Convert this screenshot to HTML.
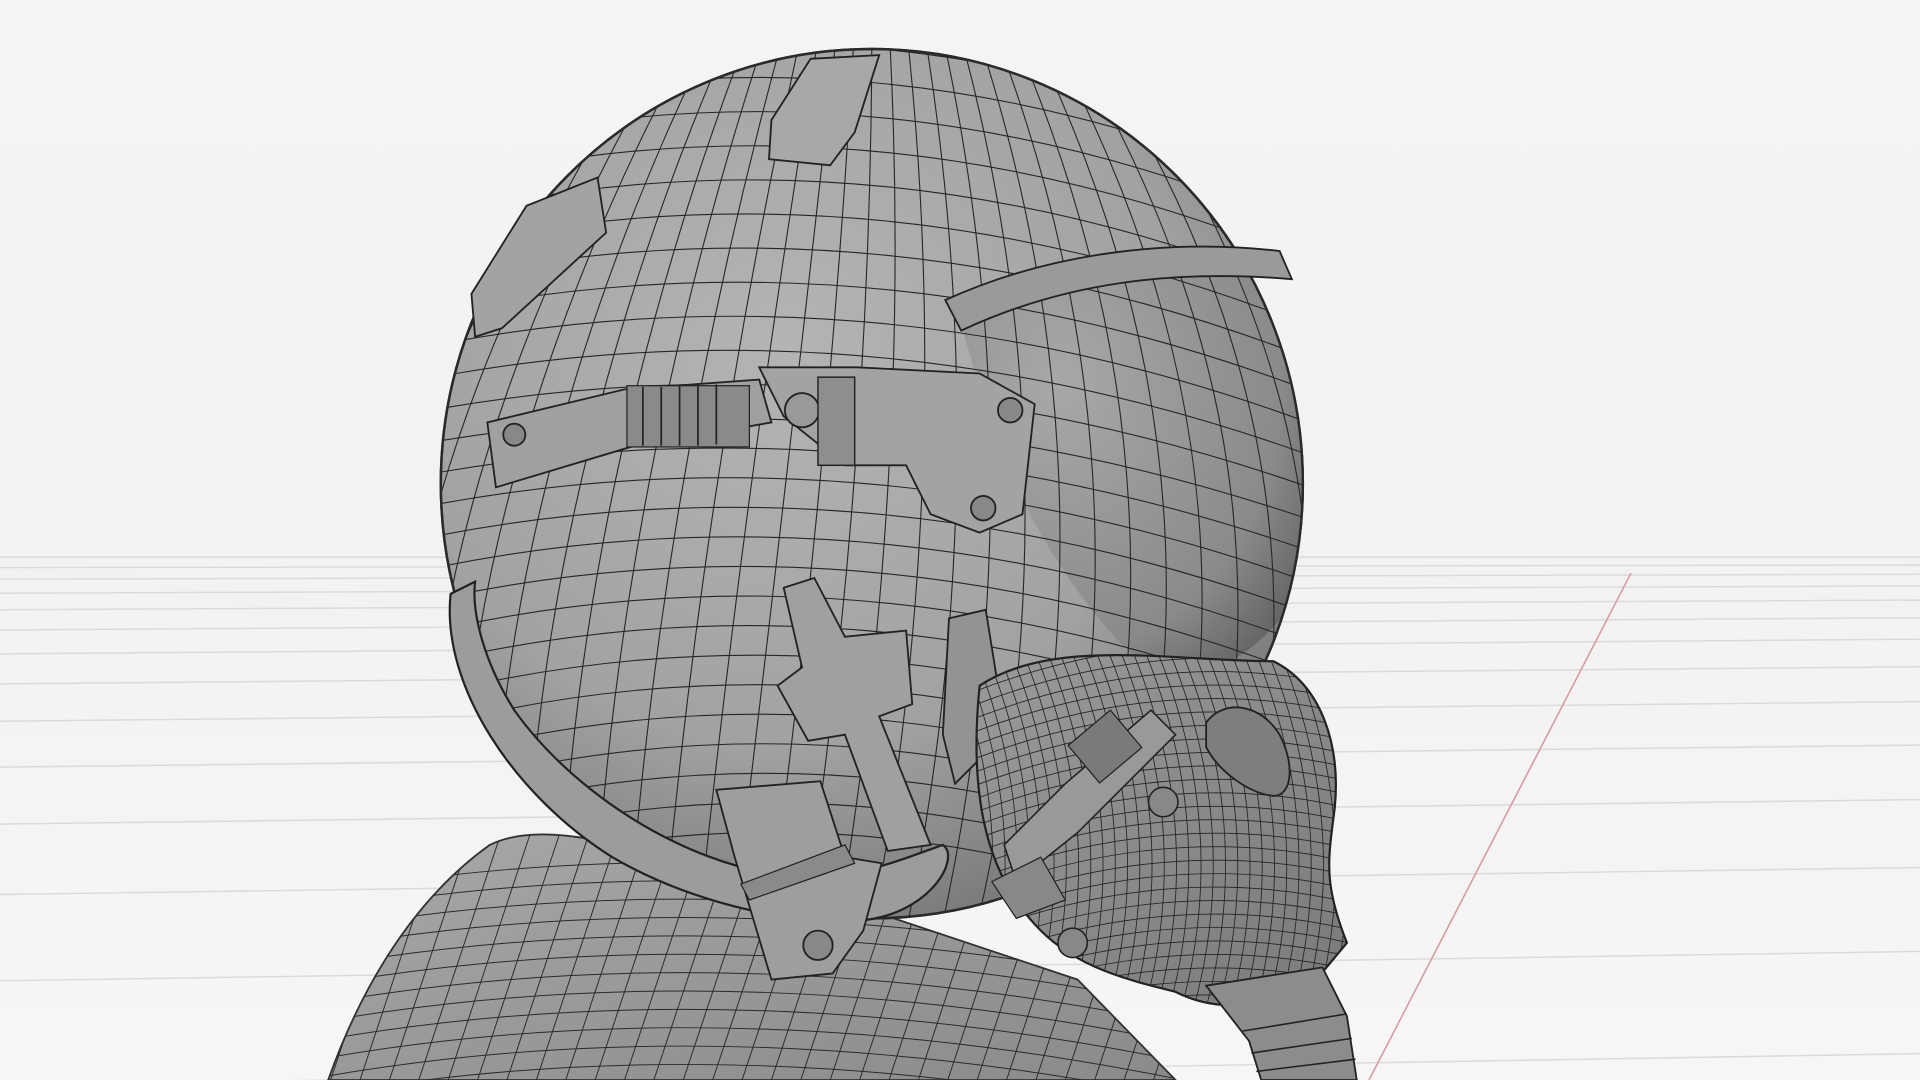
<!DOCTYPE html>
<html><head><meta charset="utf-8"><style>
html,body{margin:0;padding:0;background:#f4f4f4;overflow:hidden;width:1920px;height:1080px}
svg{display:block}
</style></head><body>
<svg id="s" width="1920" height="1080" viewBox="0 0 1568 882" xmlns="http://www.w3.org/2000/svg">
<defs>
<linearGradient id="bg" x1="0" y1="0" x2="0" y2="1"><stop offset="0" stop-color="#f4f4f4"/><stop offset="0.5" stop-color="#f2f2f2"/><stop offset="1" stop-color="#f6f6f6"/></linearGradient>
<radialGradient id="hg" cx="0.4" cy="0.35" r="0.75"><stop offset="0" stop-color="#b4b4b4"/><stop offset="0.6" stop-color="#a2a2a2"/><stop offset="1" stop-color="#6e6e6e"/></radialGradient>
<radialGradient id="vg" cx="0.3" cy="0.3" r="0.9"><stop offset="0" stop-color="#a8a8a8"/><stop offset="0.7" stop-color="#8a8a8a"/><stop offset="1" stop-color="#5a5a5a"/></radialGradient>
<linearGradient id="bodyg" x1="0" y1="0" x2="1" y2="1"><stop offset="0" stop-color="#a8a8a8"/><stop offset="1" stop-color="#8a8a8a"/></linearGradient>
<linearGradient id="mg" x1="0" y1="0" x2="1" y2="1"><stop offset="0" stop-color="#9a9a9a"/><stop offset="1" stop-color="#7a7a7a"/></linearGradient>
<clipPath id="hc"><ellipse cx="712" cy="395" rx="352" ry="355"/></clipPath>
<clipPath id="bc"><path d="M268,882 C290,820 330,740 400,690 C440,670 500,690 560,700 L700,740 C760,760 820,780 880,800 L960,882 Z"/></clipPath>
<clipPath id="mc"><path d="M800,560 C860,520 960,540 1040,540 C1080,560 1095,610 1090,660 C1085,700 1080,720 1100,770 L1075,800 C1040,820 1000,830 960,810 C920,800 880,790 850,760 C810,720 790,660 800,560 Z"/></clipPath>
</defs>
<rect width="1568" height="882" fill="url(#bg)"/>
<g id="floor" stroke="#dadada" stroke-width="1.2" fill="none"></g>
<line x1="1332" y1="468" x2="1118" y2="882" stroke="#d99aa2" stroke-width="1.3"/>
<path d="M268,882 C290,820 330,740 400,690 C440,670 500,690 560,700 L700,740 C760,760 820,780 880,800 L960,882 Z" fill="url(#bodyg)" stroke="#333" stroke-width="1.5"/>
<g id="bodyw" clip-path="url(#bc)" stroke="#2a2a2a" stroke-width="0.8" fill="none"></g>
<ellipse cx="712" cy="395" rx="352" ry="355" fill="url(#hg)" stroke="#333" stroke-width="2"/>
<path d="M780,250 C880,210 980,200 1050,225 C1075,300 1070,420 1050,500 C1020,540 980,555 950,555 C900,520 860,460 820,380 C800,320 790,280 780,250 Z" fill="url(#vg)" clip-path="url(#hc)"/>
<g id="helw" clip-path="url(#hc)" stroke="#262626" stroke-width="0.9" fill="none"></g>
<ellipse cx="712" cy="395" rx="352" ry="355" fill="none" stroke="#2a2a2a" stroke-width="2"/>
<path d="M772,245 C860,205 960,195 1045,205 L1055,228 C960,220 870,230 785,270 Z" fill="#9a9a9a" stroke="#222" stroke-width="1.5"/>
<path d="M630,98 L662,48 L718,45 L698,108 L678,135 L628,130 Z" fill="#a8a8a8" stroke="#222" stroke-width="1.5"/>
<path d="M385,240 L430,168 L488,145 L495,190 L410,268 L388,275 Z" fill="#a3a3a3" stroke="#222" stroke-width="1.5"/>
<path d="M368,485 C360,560 420,650 500,700 C560,735 640,755 700,752 C760,748 785,700 770,690 C740,700 700,720 640,715 C560,705 470,650 420,580 C395,540 385,500 388,475 Z" fill="#9c9c9c" stroke="#222" stroke-width="1.8"/>
<path d="M398,345 L510,318 L620,310 L630,345 L515,365 L405,398 Z" fill="#a0a0a0" stroke="#222" stroke-width="1.5"/>
<rect x="512" y="315" width="100" height="50" fill="#8a8a8a" stroke="#222" stroke-width="1"/>
<g stroke="#222" stroke-width="1.4"><line x1="525" y1="316" x2="525" y2="364"/><line x1="540" y1="316" x2="540" y2="364"/><line x1="555" y1="315" x2="555" y2="364"/><line x1="570" y1="314" x2="570" y2="364"/><line x1="585" y1="314" x2="585" y2="363"/></g>
<path d="M620,300 L700,300 L800,305 L845,330 L835,420 L800,435 L760,420 L740,380 L690,380 L640,340 Z" fill="#a3a3a3" stroke="#222" stroke-width="1.5"/>
<circle cx="655" cy="335" r="14" fill="#999" stroke="#222" stroke-width="1.5"/>
<rect x="668" y="308" width="30" height="72" fill="#8e8e8e" stroke="#222" stroke-width="1.2"/>
<circle cx="825" cy="335" r="10" fill="#888" stroke="#222" stroke-width="1.5"/>
<circle cx="803" cy="415" r="10" fill="#888" stroke="#222" stroke-width="1.5"/>
<circle cx="420" cy="355" r="9" fill="#888" stroke="#222" stroke-width="1.5"/>
<path d="M640,480 L665,472 L690,520 L740,515 L745,575 L718,585 L760,690 L725,695 L690,600 L660,605 L635,560 L655,545 Z" fill="#a0a0a0" stroke="#222" stroke-width="1.5"/>
<path d="M585,645 L670,638 L690,700 L720,705 L705,760 L680,795 L630,800 L600,700 Z" fill="#9e9e9e" stroke="#222" stroke-width="1.5"/>
<path d="M605,722 L690,690 L698,705 L612,735 Z" fill="#8a8a8a" stroke="#222"/>
<circle cx="668" cy="772" r="12" fill="#888" stroke="#222" stroke-width="1.5"/>
<path d="M775,505 L805,498 L815,560 L800,620 L780,640 L770,600 Z" fill="#939393" stroke="#222" stroke-width="1.5"/>
<path d="M800,560 C860,520 960,540 1040,540 C1080,560 1095,610 1090,660 C1085,700 1080,720 1100,770 L1075,800 C1040,820 1000,830 960,810 C920,800 880,790 850,760 C810,720 790,660 800,560 Z" fill="url(#mg)" stroke="#222" stroke-width="1.8"/>
<g id="maskw" clip-path="url(#mc)" stroke="#242424" stroke-width="0.7" fill="none"></g>
<path d="M985,590 C1000,570 1030,575 1045,600 C1058,625 1055,650 1040,650 C1020,648 995,630 985,610 Z" fill="#7e7e7e" stroke="#222" stroke-width="1.5"/>
<path d="M820,690 L870,640 L940,580 L960,600 L880,680 L830,720 Z" fill="#999" stroke="#222" stroke-width="1.3"/>
<rect x="880" y="590" width="45" height="40" transform="rotate(-40 902 610)" fill="#7a7a7a" stroke="#222"/>
<circle cx="950" cy="655" r="12" fill="#888" stroke="#222" stroke-width="1.3"/>
<circle cx="876" cy="770" r="12" fill="#888" stroke="#222" stroke-width="1.3"/>
<path d="M810,720 L850,700 L870,735 L830,750 Z" fill="#888" stroke="#222"/>
<path d="M985,805 L1080,790 L1100,830 L1108,882 L1030,882 L1020,850 Z" fill="#8c8c8c" stroke="#222" stroke-width="1.5"/>
<g stroke="#222" stroke-width="1.3" fill="none"><path d="M1015,842 L1100,828"/><path d="M1022,860 L1104,848"/><path d="M1026,875 L1107,865"/></g>
</svg>
<script>
(function(){
var NS="http://www.w3.org/2000/svg";
function ln(g,d){var p=document.createElementNS(NS,"path");p.setAttribute("d",d);g.appendChild(p);}
var f=document.getElementById("floor");
var ys=[455,463,472,483,496,512,531,555,585,622,668,725,795,880];
ys.forEach(function(y,i){ln(f,"M0,"+(y+i*0.5)+" L1568,"+(y-i*1.5));});
var h=document.getElementById("helw");
for(var i=-14;i<=14;i++){var cy=395+i*26;var ry=40+Math.abs(i)*4;
ln(h,"M330,"+(cy-30)+" Q712,"+(cy-ry-60)+" 1100,"+(cy+40));}
for(var j=-13;j<=13;j++){var x=712+j*27;
ln(h,"M"+(712+j*14)+",20 Q"+(x+j*8)+",400 "+(712+j*28-60)+",780");}
var b=document.getElementById("bodyw");
for(var i=0;i<14;i++){var y=690+i*15;ln(b,"M260,"+(y+40)+" Q600,"+(y-20)+" 980,"+(y+60));}
for(var j=0;j<30;j++){var x=260+j*24;ln(b,"M"+(x+60)+",660 L"+(x-20)+",900");}
var m=document.getElementById("maskw");
for(var i=0;i<30;i++){var y=520+i*11;ln(m,"M780,"+(y+40)+" Q950,"+(y-30)+" 1110,"+(y+10));}
for(var j=0;j<36;j++){var x=780+j*10;ln(m,"M"+(x-40)+",520 Q"+(x+30)+",680 "+(x-20)+",840");}
})();
</script>
</body></html>
